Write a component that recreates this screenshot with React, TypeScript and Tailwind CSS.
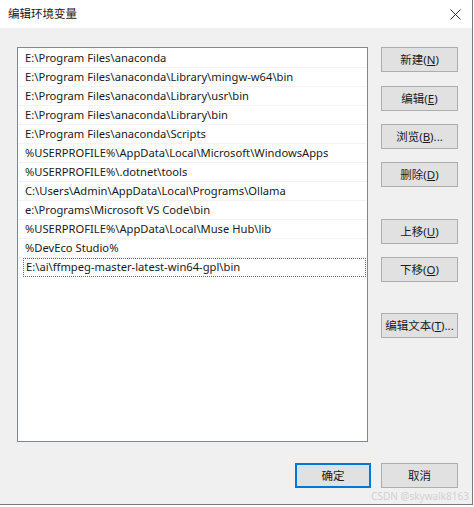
const paths = [
  "E:\\Program Files\\anaconda",
  "E:\\Program Files\\anaconda\\Library\\mingw-w64\\bin",
  "E:\\Program Files\\anaconda\\Library\\usr\\bin",
  "E:\\Program Files\\anaconda\\Library\\bin",
  "E:\\Program Files\\anaconda\\Scripts",
  "%USERPROFILE%\\AppData\\Local\\Microsoft\\WindowsApps",
  "%USERPROFILE%\\.dotnet\\tools",
  "C:\\Users\\Admin\\AppData\\Local\\Programs\\Ollama",
  "e:\\Programs\\Microsoft VS Code\\bin",
  "%USERPROFILE%\\AppData\\Local\\Muse Hub\\lib",
  "%DevEco Studio%",
];

const font = { fontFamily: '"Microsoft YaHei UI", "Noto Sans", "Noto Sans CJK SC", sans-serif' };

function Btn({ label, hot, suffix = "", className = "" }: { label: string; hot: string; suffix?: string; className?: string }) {
  return (
    <button
      className={`h-[25px] w-[77px] border border-[#adadad] bg-[#e1e1e1] text-[11.5px] text-[#1a1a1a] flex items-center justify-center leading-none ${className}`}
    >
      {label}(<span className="underline">{hot}</span>){suffix}
    </button>
  );
}

export default function App() {
  return (
    <div className="w-[474px] h-[507px] bg-white" style={font}>
      <div className="w-[473px] h-[505px] border-r border-b border-[#7a7a7a] bg-[#f0f0f0] flex flex-col">
        <div className="h-[28px] bg-white flex items-center justify-between pl-[8px] pr-[10px]">
          <span className="text-[11.5px] text-[#1a1a1a]">编辑环境变量</span>
          <svg width="11" height="11" viewBox="0 0 11 11" className="mr-[1px]">
            <path d="M0.5 0.5 L10.5 10.5 M10.5 0.5 L0.5 10.5" stroke="#333" strokeWidth="1" />
          </svg>
        </div>
        <div className="flex pl-[17px] pt-[19px]">
          <div className="w-[351px] h-[395px] border border-[#828790] bg-white py-[1px]">
            {paths.map((p) => (
              <div key={p} className="h-[19px] border-b border-[#f3f3f3] pl-[7px] flex items-center text-[11.2px] text-[#1a1a1a] whitespace-nowrap">
                {p}
              </div>
            ))}
            <div className="h-[19px] ml-[5px] mr-[1px] border border-dotted border-[#666] pl-[2px] flex items-center text-[11.2px] text-[#1a1a1a] whitespace-nowrap">
              E:\ai\ffmpeg-master-latest-win64-gpl\bin
            </div>
          </div>
          <div className="ml-[13px] flex flex-col">
            <Btn label="新建" hot="N" />
            <Btn label="编辑" hot="E" className="mt-[14px]" />
            <Btn label="浏览" hot="B" suffix="..." className="mt-[13px]" />
            <Btn label="删除" hot="D" className="mt-[13px]" />
            <Btn label="上移" hot="U" className="mt-[32px]" />
            <Btn label="下移" hot="O" className="mt-[13px]" />
            <Btn label="编辑文本" hot="T" suffix="..." className="mt-[31px]" />
          </div>
        </div>
        <div className="flex justify-end pr-[14px] pt-[21px] gap-[10px]">
          <button className="h-[25px] w-[76px] border-2 border-[#0078d7] bg-[#e1e1e1] text-[11.5px] text-[#1a1a1a]">确定</button>
          <button className="h-[25px] w-[77px] border border-[#adadad] bg-[#e1e1e1] text-[11.5px] text-[#1a1a1a]">取消</button>
        </div>
        <div className="flex justify-end pr-[3px] pt-[3px]">
          <span className="text-[10px] text-[#d0d0d0] leading-none">CSDN @skywalk8163</span>
        </div>
      </div>
    </div>
  );
}
